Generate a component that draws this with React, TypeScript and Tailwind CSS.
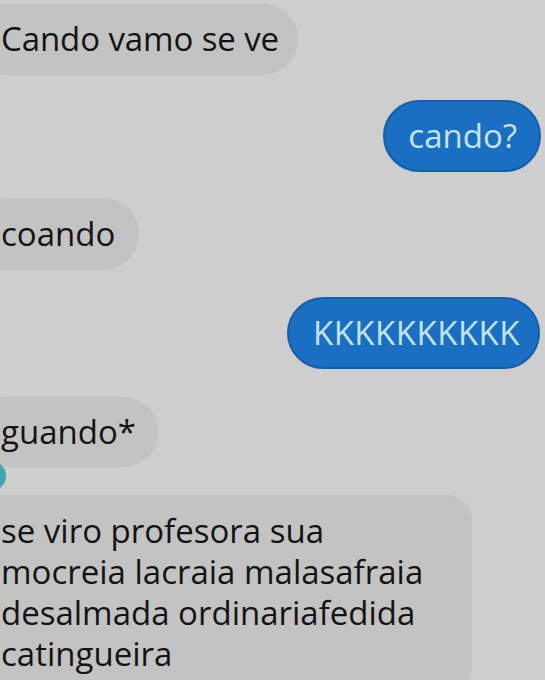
export default function App() {
  const font = { fontFamily: '"Open Sans", "Noto Sans", sans-serif' };
  const lines = ["se viro profesora sua", "mocreia lacraia malasafraia", "desalmada ordinariafedida", "catingueira"];
  return (
    <div className="w-[545px] h-[680px] overflow-hidden bg-[#cecece]" style={font}>
      <div className="flex flex-col pt-[3px]">
        {/* left */}
        <div className="flex">
          <div className="-ml-[30px] h-[72px] flex items-center pl-[31px] pr-[19px] rounded-[36px] bg-[#c3c3c3] text-[33px] tracking-[-0.1px] text-[#141414]">
            Cando vamo se ve
          </div>
        </div>

        <div className="flex justify-end mt-[25px] pr-[4px]">
          <div className="h-[72px] flex items-center pl-[23px] pr-[22px] rounded-[36px] bg-[#1b6fc2] border-2 border-[#155fa6] text-[33px] text-[#c4e3ea]">
            cando?
          </div>
        </div>

        <div className="flex mt-[26px]">
          <div className="-ml-[30px] h-[72px] flex items-center pl-[31px] pr-[24px] rounded-[36px] bg-[#c3c3c3] text-[33px] text-[#141414]">
            coando
          </div>
        </div>

        <div className="flex justify-end mt-[27px] pr-[5px]">
          <div className="h-[72px] flex items-center pl-[24px] pr-[18px] rounded-[36px] bg-[#1b6fc2] border-2 border-[#155fa6] text-[33px] tracking-[0.5px] text-[#c4e3ea]">
            KKKKKKKKKK
          </div>
        </div>

        <div className="flex mt-[28px]">
          <div className="-ml-[30px] h-[70px] flex items-center pl-[31px] pr-[23px] rounded-[35px] bg-[#c3c3c3] text-[33px] text-[#141414]">
            guando*
          </div>
        </div>

        <div className="relative flex mt-[28px]">
          <div className="absolute -left-[24px] -top-[34px] w-[30px] h-[30px] rounded-full bg-[#3fa7b0]" />
          <div className="-ml-[30px] w-[502px] pl-[31px] pr-[20px] pt-[15px] pb-[20px] rounded-[26px] bg-[#c3c3c3] text-[33px] text-[#141414]">
            {lines.map((l) => (
              <div key={l} className="h-[41px] leading-[41px] whitespace-nowrap">
                {l}
              </div>
            ))}
          </div>
        </div>
      </div>
    </div>
  );
}
